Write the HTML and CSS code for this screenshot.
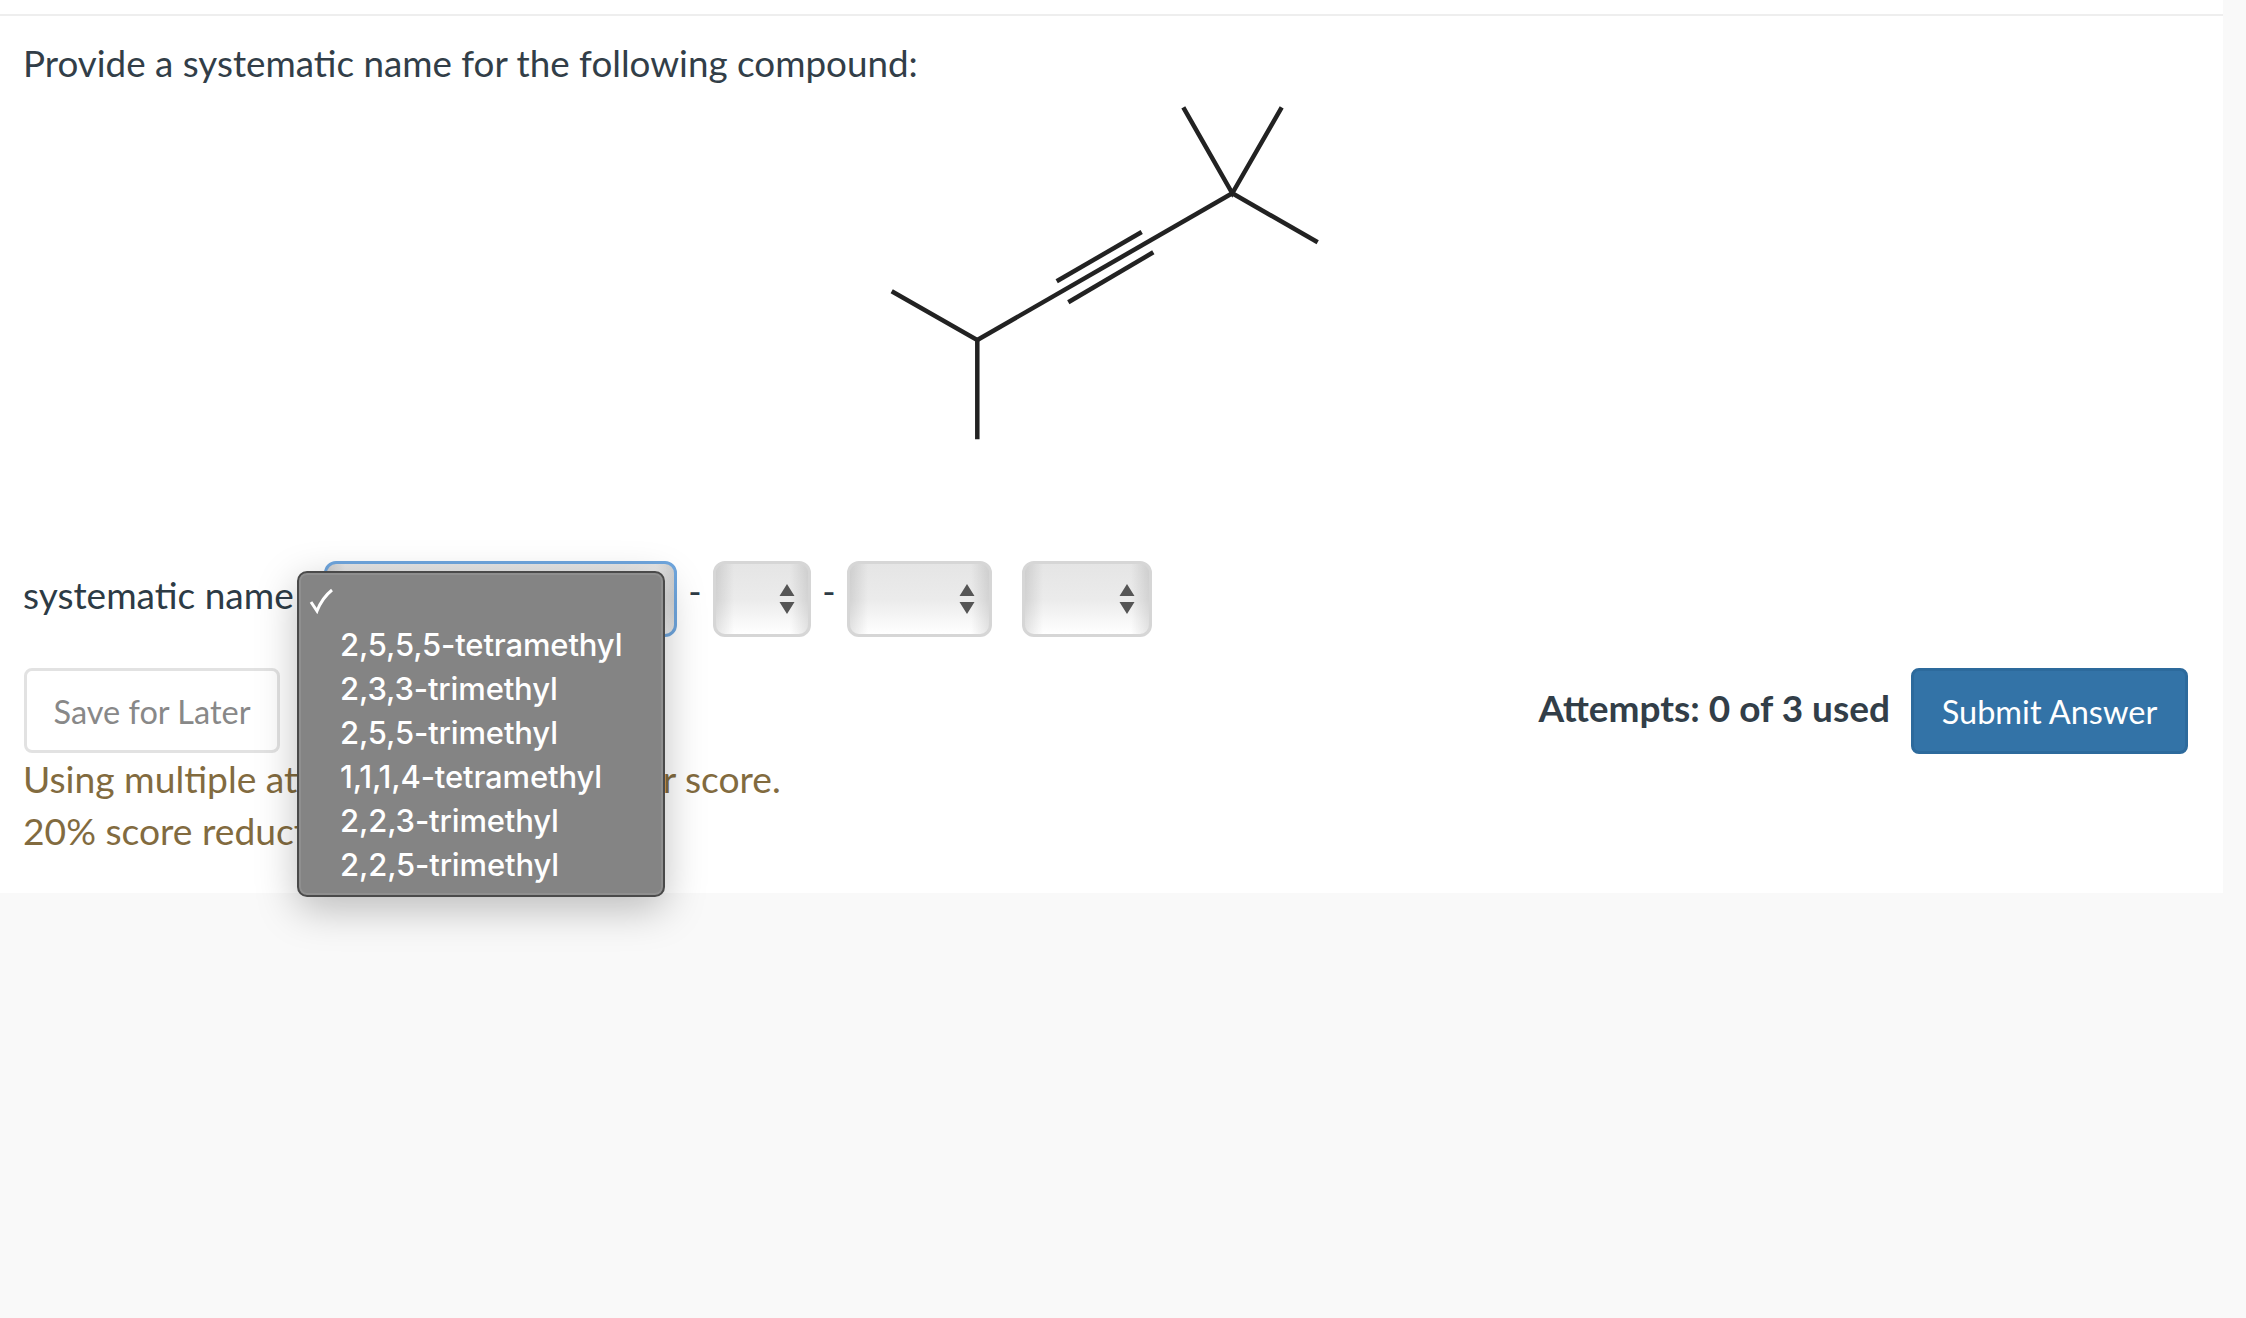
FILE: index.html
```html
<!DOCTYPE html>
<html lang="en">
<head>
    <meta charset="UTF-8">
    <title>Systematic name question</title>
    <link rel="stylesheet" href="styles.css">
</head>
<body>

    <div class="page">
        <div class="rule"></div>

        <p class="question">Provide a systematic name for the following compound:</p>

        <svg class="molecule" width="450" height="350" viewBox="880 100 450 350">
            <path d="M891.7 291.3 L977.3 340 L977.3 439.3" />
            <path d="M977.3 340 L1232.3 193.3" />
            <path d="M1056.7 281.3 L1141.7 232" />
            <path d="M1068.3 302.3 L1153.3 252.3" />
            <path d="M1183.3 107.3 L1232.3 193.3 L1281.7 107.3" />
            <path d="M1232.3 193.3 L1317.7 242.3" />
        </svg>

        <div class="answer-row">
            <span class="label">systematic name</span>
            <div class="select select-focus select-first"></div>
            <span class="dash">-</span>
            <div class="select select-second">
                <svg class="arrows" width="16" height="30" viewBox="0 0 16 30"><path d="M8 0 L15.500 12 L.5 12 Z M.5 18 L15.500 18 L8 30 Z" /></svg>
            </div>
            <span class="dash">-</span>
            <div class="select select-third">
                <svg class="arrows" width="16" height="30" viewBox="0 0 16 30"><path d="M8 0 L15.500 12 L.5 12 Z M.5 18 L15.500 18 L8 30 Z" /></svg>
            </div>
            <div class="select select-fourth">
                <svg class="arrows" width="16" height="30" viewBox="0 0 16 30"><path d="M8 0 L15.500 12 L.5 12 Z M.5 18 L15.500 18 L8 30 Z" /></svg>
            </div>

            <!-- open native menu of the first select -->
            <div class="menu">
                <div class="menu-item menu-checked">
                    <svg class="check" width="26" height="26" viewBox="0 0 26 26"><path d="M2 14 L8 23 Q13 10 23 2" /></svg>
                </div>
                <div class="menu-item">2,5,5,5-tetramethyl</div>
                <div class="menu-item">2,3,3-trimethyl</div>
                <div class="menu-item">2,5,5-trimethyl</div>
                <div class="menu-item">1,1,1,4-tetramethyl</div>
                <div class="menu-item">2,2,3-trimethyl</div>
                <div class="menu-item">2,2,5-trimethyl</div>
            </div>
        </div>

        <div class="actions">
            <button class="btn btn-save">Save for Later</button>
            <div class="submit-group">
                <span class="attempts">Attempts: 0 of 3 used</span>
                <button class="btn btn-submit">Submit Answer</button>
            </div>
        </div>

        <p class="notice">Using multiple attempts will impact your score.<br>20% score reduction after attempt 2</p>
    </div>

</body>
</html>
```

FILE: styles.css
```css
* {
    margin: 0;
    padding: 0;
    box-sizing: border-box;
}

body {
    font-family: Lato, "Open Sans", sans-serif;
    background-color: #f9f9f9;
    color: #2d3b45;
    height: 1318px;
    overflow: hidden;
}

.page {
    width: 2223px;
    height: 893px;
    background-color: #fff;
    padding-top: 14px;
}

.rule {
    height: 2px;
    background-color: #eee;
}

.question {
    font-size: 36.800px;
    line-height: 52px;
    margin: 21px 0 0 23px;
    color: #323e48;
}

.molecule {
    display: block;
    margin: 11px 0 0 880px;
}

.molecule path {
    fill: none;
    stroke: #222;
    stroke-width: 4.500;
}

.answer-row {
    position: relative;
    display: flex;
    align-items: flex-start;
    height: 76px;
    margin: 111px 0 0 24px;
}

.label {
    width: 300px;
    margin-left: -1px;
    margin-right: 1px;
    font-size: 37px;
    line-height: 52px;
    margin-top: 8px;
    white-space: nowrap;
}

.dash {
    width: 36px;
    text-align: center;
    font-size: 36px;
    line-height: 60px;
}

.select {
    height: 76px;
    border: 3px solid #d6d6d6;
    border-radius: 12px;
    display: flex;
    align-items: center;
    justify-content: flex-end;
    background-color: #f2f2f2;
    background-image:
        linear-gradient(to right, rgba(0, 0, 0, 0.1), rgba(0, 0, 0, 0) 18px, rgba(0, 0, 0, 0) calc(100% - 18px), rgba(0, 0, 0, 0.1)),
        linear-gradient(to bottom, #e5e5e5, #ebebeb 50%, #fff);
}

.select-focus {
    border-color: #6fa6de;
}

.select-first {
    width: 353px;
}

.select-second {
    width: 98px;
    padding-right: 13px;
}

.select-third {
    width: 145px;
    padding-right: 14px;
}

.select-fourth {
    width: 130px;
    margin-left: 30px;
    padding-right: 14px;
}

.arrows path {
    fill: #555;
}

.menu {
    position: absolute;
    top: 10px;
    left: 273px;
    width: 368px;
    height: 326px;
    padding: 6px 0 0 0;
    background-color: #848484;
    border: 2px solid #4a4a4a;
    border-radius: 10px;
    box-shadow: inset 0 0 0 2px #8f8f8f, 0 12px 40px rgba(0, 0, 0, 0.25);
    font-family: Inter, "Open Sans", sans-serif;
    font-size: 31px;
    font-weight: 500;
    letter-spacing: -0.15px;
    color: #fff;
}

.menu-item {
    height: 44px;
    line-height: 44px;
    padding-left: 41px;
    white-space: nowrap;
}

.menu-checked {
    position: relative;
}

.check {
    position: absolute;
    top: 9px;
    left: 10px;
}

.check path {
    fill: none;
    stroke: #fff;
    stroke-width: 3;
}

.actions {
    display: flex;
    justify-content: space-between;
    align-items: center;
    margin-top: 30px;
    padding: 0 35px 0 24px;
    height: 86px;
}

.btn {
    font-family: Lato, "Open Sans", sans-serif;
    font-size: 32.500px;
    border-radius: 8px;
    cursor: pointer;
    padding-top: 2px;
}

.btn-save {
    width: 256px;
    height: 85px;
    margin-top: 1px;
    background-color: #fff;
    border: 3px solid #e2e2e2;
    color: #888;
}

.submit-group {
    display: flex;
    align-items: center;
    gap: 21px;
}

.attempts {
    font-size: 37px;
    font-weight: bold;
    line-height: 52px;
    padding-bottom: 4px;
    color: #323e48;
}

.btn-submit {
    width: 277px;
    height: 86px;
    margin-top: 1px;
    background-color: #3373a7;
    border: 3px solid #2d6a9c;
    color: #fff;
}

.notice {
    font-size: 37.200px;
    line-height: 52px;
    color: #826b3f;
    margin-left: 23px;
}
```
